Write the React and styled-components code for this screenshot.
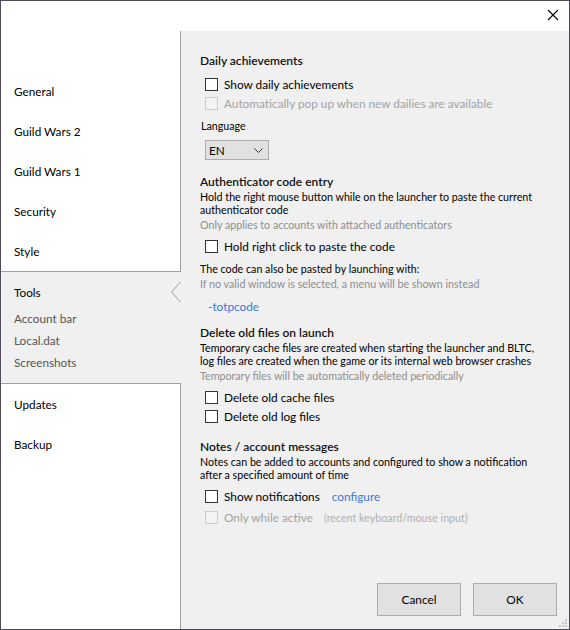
import React from 'react';
import styled, { createGlobalStyle } from 'styled-components';

const Global = createGlobalStyle`
  html, body {
    margin: 0;
    padding: 0;
    background: #ffffff;
  }
  body {
    font-family: "Segoe UI", Lato, "Noto Sans", sans-serif;
    color: #000;
  }
`;

const Window = styled.div`
  position: relative;
  width: 570px;
  height: 630px;
  box-sizing: border-box;
  border: 1px solid #50495a;
  background: #fff;
  display: flex;
  flex-direction: column;
`;

const TitleBar = styled.div`
  height: 30px;
  display: flex;
  justify-content: flex-end;
  align-items: center;
  padding-right: 10px;
`;

const CloseButton = styled.button`
  border: none;
  background: transparent;
  padding: 0;
  width: 12px;
  height: 12px;
  display: flex;
  margin-top: -2px;
`;

const Body = styled.div`
  flex: 1;
  display: flex;
  min-height: 0;
`;

const Sidebar = styled.nav`
  width: 179px;
  flex-shrink: 0;
  border-right: 1px solid #a0a0a0;
  padding-top: 40px;
  display: flex;
  flex-direction: column;
`;

const NavItem = styled.div`
  height: 40px;
  display: flex;
  align-items: center;
  padding-left: 13px;
  font-size: 11.75px;
  color: #000;
`;

const NavGroup = styled.div`
  position: relative;
  background: #f0f0f0;
  border-top: 1px solid #a0a0a0;
  border-bottom: 1px solid #a0a0a0;
  margin-right: -1px;
  padding: 5px 0 10px;
`;

const GroupTitle = styled(NavItem)`
  height: 30px;
`;

const SubItem = styled.div`
  height: 22px;
  display: flex;
  align-items: center;
  padding-left: 13px;
  font-size: 11.75px;
  color: #555;
`;

const Notch = styled.svg`
  position: absolute;
  right: 0;
  top: 10px;
`;

const Panel = styled.main`
  flex: 1;
  min-width: 0;
  background: #f0f0f0;
  padding: 22px 12px 13px 19px;
  display: flex;
  flex-direction: column;
  white-space: nowrap;
`;

const Heading = styled.div`
  font-size: 12px;
  font-weight: 600;
  line-height: 16px;
  color: #111;
  margin-top: ${(p) => p.$mt || 0}px;
`;

const Desc = styled.div`
  font-size: 10.7px;
  line-height: 13px;
  color: ${(p) => (p.$muted ? '#8e8e8e' : '#000')};
  margin-top: ${(p) => p.$mt || 0}px;
`;

const CheckRow = styled.label`
  display: flex;
  align-items: center;
  height: 19px;
  padding-left: 5px;
  font-size: 11.8px;
  color: ${(p) => (p.$disabled ? '#a3a3a3' : '#000')};
  margin-top: ${(p) => p.$mt || 0}px;
`;

const Box = styled.span`
  width: 11px;
  height: 11px;
  border: 1px solid ${(p) => (p.$disabled ? '#cccccc' : '#333333')};
  background: ${(p) => (p.$disabled ? '#f3f3f3' : '#ffffff')};
  margin-right: 6px;
  flex-shrink: 0;
`;

const Hint = styled.span`
  font-size: 10.7px;
  color: #b0b0b0;
  margin-left: 11px;
`;

const Link = styled.span`
  color: #3a78d8;
  font-size: 11.8px;
  margin-left: ${(p) => p.$ml || 0}px;
`;

const LinkLine = styled.div`
  line-height: 16px;
  padding-left: 8px;
  margin-top: 7px;
`;

const FieldLabel = styled.div`
  font-size: 10.7px;
  line-height: 16px;
  margin-top: 5px;
  padding-left: 1px;
`;

const Select = styled.div`
  height: 18px;
  margin: 6px 0 0 5px;
  border: 1px solid #adadad;
  background: #e1e1e1;
  display: flex;
  align-items: center;
  justify-content: space-between;
  padding: 0 5px 0 3px;
  box-sizing: content-box;
  width: 54px;
  align-self: flex-start;
  font-size: 11.8px;
`;

const ButtonRow = styled.div`
  margin-top: auto;
  display: flex;
  justify-content: flex-end;
  gap: 12px;
`;

const Button = styled.button`
  width: 84px;
  height: 33px;
  border: 1px solid #adadad;
  background: #e1e1e1;
  font-family: inherit;
  font-size: 11.8px;
  color: #000;
`;

const Grip = styled.svg`
  position: absolute;
  right: 1px;
  bottom: 1px;
`;

const Check = ({ children, disabled, mt }) => (
  <CheckRow $disabled={disabled} $mt={mt}>
    <Box $disabled={disabled} />
    {children}
  </CheckRow>
);

export default function App() {
  return (
    <>
      <Global />
      <Window>
        <TitleBar>
          <CloseButton aria-label="Close">
            <svg width="12" height="12" viewBox="0 0 12 12">
              <path d="M1 1 L11 11 M11 1 L1 11" stroke="#000" strokeWidth="1.1" />
            </svg>
          </CloseButton>
        </TitleBar>
        <Body>
          <Sidebar>
            <NavItem>General</NavItem>
            <NavItem>Guild Wars 2</NavItem>
            <NavItem>Guild Wars 1</NavItem>
            <NavItem>Security</NavItem>
            <NavItem>Style</NavItem>
            <NavGroup>
              <GroupTitle>Tools</GroupTitle>
              <SubItem>Account bar</SubItem>
              <SubItem>Local.dat</SubItem>
              <SubItem>Screenshots</SubItem>
              <Notch width="11" height="20" viewBox="0 0 11 20">
                <rect x="0" y="0" width="11" height="20" fill="#f0f0f0" />
                <polyline points="10.5,0 1.5,10 10.5,20" fill="none" stroke="#a0a0a0" strokeWidth="1" />
              </Notch>
            </NavGroup>
            <NavItem>Updates</NavItem>
            <NavItem>Backup</NavItem>
          </Sidebar>
          <Panel>
            <Heading>Daily achievements</Heading>
            <Check mt={6}>Show daily achievements</Check>
            <Check disabled>Automatically pop up when new dailies are available</Check>
            <FieldLabel>Language</FieldLabel>
            <Select>
              <span>EN</span>
              <svg width="9" height="5" viewBox="0 0 9 5">
                <polyline points="0.5,0.5 4.5,4.5 8.5,0.5" fill="none" stroke="#333" strokeWidth="1" />
              </svg>
            </Select>

            <Heading $mt={14}>Authenticator code entry</Heading>
            <Desc>
              Hold the right mouse button while on the launcher to paste the current
              <br />
              authenticator code
            </Desc>
            <Desc $muted $mt={2}>Only applies to accounts with attached authenticators</Desc>
            <Check mt={6}>Hold right click to paste the code</Check>
            <Desc $mt={6}>The code can also be pasted by launching with:</Desc>
            <Desc $muted $mt={2}>If no valid window is selected, a menu will be shown instead</Desc>
            <LinkLine>
              <Link>-totpcode</Link>
            </LinkLine>

            <Heading $mt={10}>Delete old files on launch</Heading>
            <Desc>
              Temporary cache files are created when starting the launcher and BLTC,
              <br />
              log files are created when the game or its internal web browser crashes
            </Desc>
            <Desc $muted $mt={2}>Temporary files will be automatically deleted periodically</Desc>
            <Check mt={6}>Delete old cache files</Check>
            <Check>Delete old log files</Check>

            <Heading $mt={13}>Notes / account messages</Heading>
            <Desc>
              Notes can be added to accounts and configured to show a notification
              <br />
              after a specified amount of time
            </Desc>
            <Check mt={6}>
              Show notifications<Link $ml={12}>configure</Link>
            </Check>
            <Check disabled mt={2}>
              Only while active<Hint>(recent keyboard/mouse input)</Hint>
            </Check>

            <ButtonRow>
              <Button>Cancel</Button>
              <Button>OK</Button>
            </ButtonRow>
          </Panel>
        </Body>
        <Grip width="10" height="10" viewBox="0 0 10 10">
          <rect x="7" y="1" width="2" height="2" fill="#c8c8c8" />
          <rect x="4" y="4" width="2" height="2" fill="#c8c8c8" />
          <rect x="7" y="4" width="2" height="2" fill="#c8c8c8" />
          <rect x="1" y="7" width="2" height="2" fill="#c8c8c8" />
          <rect x="4" y="7" width="2" height="2" fill="#c8c8c8" />
          <rect x="7" y="7" width="2" height="2" fill="#c8c8c8" />
        </Grip>
      </Window>
    </>
  );
}
